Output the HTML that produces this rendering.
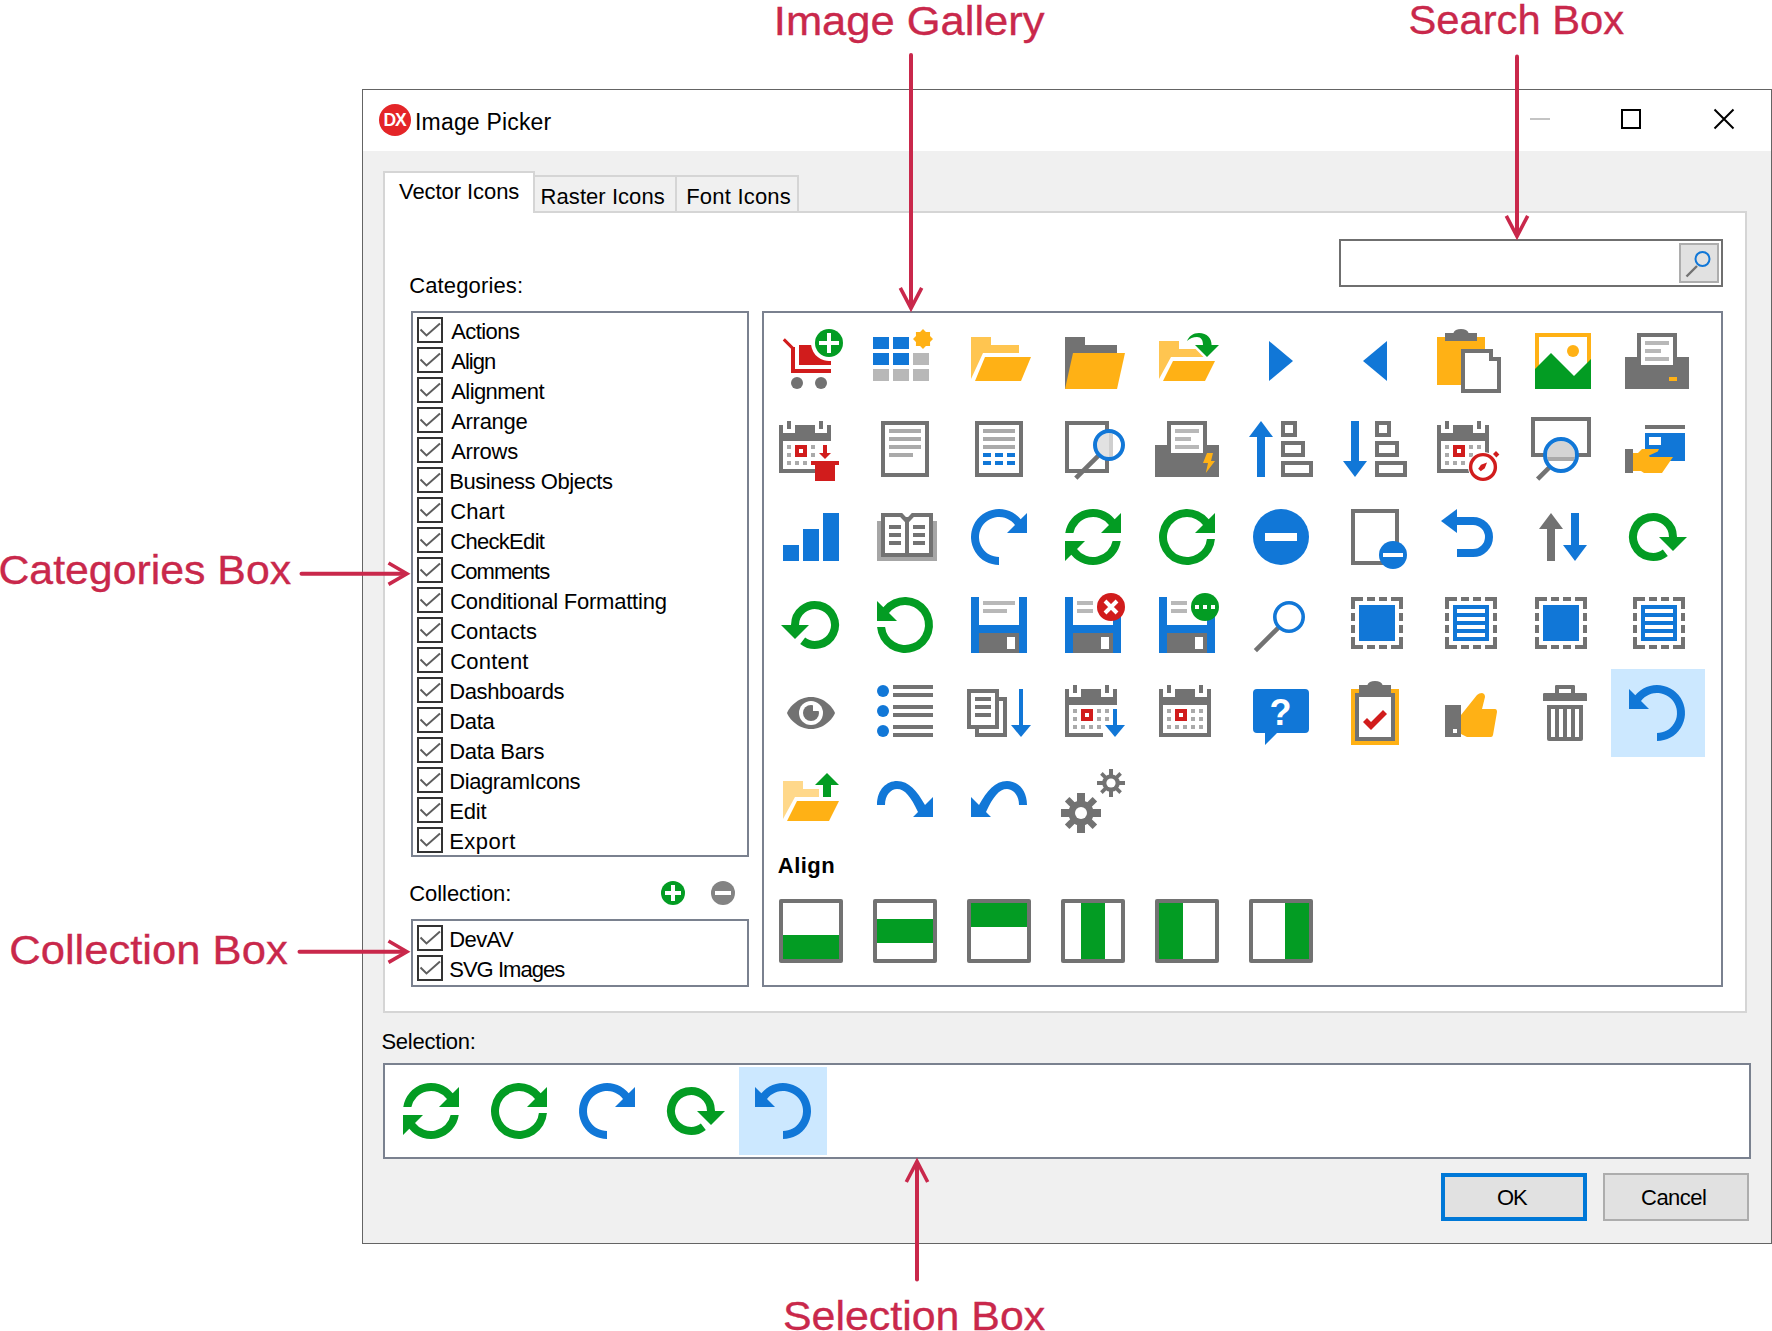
<!DOCTYPE html>
<html><head><meta charset="utf-8"><title>Image Picker</title>
<style>
html,body{margin:0;padding:0;background:#fff;}
body{width:1772px;height:1331px;position:relative;overflow:hidden;font-family:"Liberation Sans",sans-serif;color:#000;}
.abs{position:absolute;}
.t{position:absolute;white-space:nowrap;line-height:1;font-size:21px;}
.box{position:absolute;box-sizing:border-box;}
.cb{position:absolute;box-sizing:border-box;width:26px;height:26px;border:2px solid #333;background:#fff;}
.cb svg{position:absolute;left:0;top:0;}
.ic{position:absolute;width:64px;height:64px;}
svg{display:block;overflow:visible;}
</style></head><body>

<div class="box" style="left:362px;top:89px;width:1410px;height:1155px;border:1px solid #646464;background:#f0f0f0;"></div>
<div class="abs" style="left:363px;top:90px;width:1408px;height:61px;background:#fff;"></div>
<div class="abs" style="left:379px;top:104px;width:32px;height:32px;border-radius:16px;background:#E42528;"></div>
<div class="t" style="left:379px;top:111.5px;width:32px;text-align:center;font-size:17.5px;font-weight:bold;color:#fff;letter-spacing:-1.2px;text-indent:-1.2px;">DX</div>
<div class="t" style="left:415.00px;top:111.33px;font-size:23px;letter-spacing:0.182px;">Image Picker</div>
<div class="abs" style="left:1530px;top:118px;width:20px;height:2px;background:#c4c4c4;"></div>
<div class="box" style="left:1621px;top:109px;width:20px;height:20px;border:2px solid #000;"></div>
<svg class="abs" style="left:1714px;top:109px" width="20" height="20"><path d="M0.5,0.5L19.5,19.5M19.5,0.5L0.5,19.5" stroke="#000" stroke-width="2" fill="none"/></svg>
<div class="box" style="left:383px;top:211px;width:1364px;height:802px;border:2px solid #d5d5d5;background:#fff;"></div>
<div class="box" style="left:533px;top:175px;width:144px;height:38px;border:2px solid #d5d5d5;background:#f0f0f0;"></div>
<div class="box" style="left:675px;top:175px;width:124px;height:38px;border:2px solid #d5d5d5;background:#f0f0f0;"></div>
<div class="box" style="left:383px;top:171px;width:152px;height:42px;border:2px solid #d5d5d5;border-bottom:none;background:#fff;"></div>
<div class="t" style="left:399.00px;top:180.98px;font-size:22px;letter-spacing:-0.064px;">Vector Icons</div>
<div class="t" style="left:540.60px;top:185.88px;font-size:22px;letter-spacing:0.055px;">Raster Icons</div>
<div class="t" style="left:686.20px;top:185.88px;font-size:22px;letter-spacing:0.211px;">Font Icons</div>
<div class="box" style="left:1339px;top:239px;width:384px;height:48px;border:2px solid #6f6f6f;background:#fff;"></div>
<div class="box" style="left:1679px;top:243px;width:40px;height:40px;border:2px solid #adadad;background:#e1e1e1;"></div>
<svg class="abs" style="left:1679px;top:243px" width="40" height="40"><path d="M18,23L7.5,33.5" stroke="#727272" stroke-width="2.4" fill="none"/><circle cx="23.5" cy="16" r="7" fill="none" stroke="#1177D7" stroke-width="2"/></svg>
<div class="t" style="left:409.20px;top:275.08px;font-size:22px;letter-spacing:0.140px;">Categories:</div>
<div class="box" style="left:411px;top:311px;width:338px;height:546px;border:2px solid #7a818f;background:#fff;"></div>
<div class="cb" style="left:417px;top:317px"><svg width="22" height="22" viewBox="0 0 22 22"><path d="M1.5,10.5L7.5,16.5L21,4.5" fill="none" stroke="#5e5e5e" stroke-width="2"/></svg></div>
<div class="t" style="left:451.20px;top:320.88px;font-size:22px;letter-spacing:-0.567px;">Actions</div>
<div class="cb" style="left:417px;top:347px"><svg width="22" height="22" viewBox="0 0 22 22"><path d="M1.5,10.5L7.5,16.5L21,4.5" fill="none" stroke="#5e5e5e" stroke-width="2"/></svg></div>
<div class="t" style="left:451.20px;top:350.88px;font-size:22px;letter-spacing:-0.950px;">Align</div>
<div class="cb" style="left:417px;top:377px"><svg width="22" height="22" viewBox="0 0 22 22"><path d="M1.5,10.5L7.5,16.5L21,4.5" fill="none" stroke="#5e5e5e" stroke-width="2"/></svg></div>
<div class="t" style="left:451.20px;top:380.88px;font-size:22px;letter-spacing:-0.562px;">Alignment</div>
<div class="cb" style="left:417px;top:407px"><svg width="22" height="22" viewBox="0 0 22 22"><path d="M1.5,10.5L7.5,16.5L21,4.5" fill="none" stroke="#5e5e5e" stroke-width="2"/></svg></div>
<div class="t" style="left:451.20px;top:410.88px;font-size:22px;letter-spacing:-0.283px;">Arrange</div>
<div class="cb" style="left:417px;top:437px"><svg width="22" height="22" viewBox="0 0 22 22"><path d="M1.5,10.5L7.5,16.5L21,4.5" fill="none" stroke="#5e5e5e" stroke-width="2"/></svg></div>
<div class="t" style="left:451.20px;top:440.88px;font-size:22px;letter-spacing:-0.300px;">Arrows</div>
<div class="cb" style="left:417px;top:467px"><svg width="22" height="22" viewBox="0 0 22 22"><path d="M1.5,10.5L7.5,16.5L21,4.5" fill="none" stroke="#5e5e5e" stroke-width="2"/></svg></div>
<div class="t" style="left:449.20px;top:470.88px;font-size:22px;letter-spacing:-0.413px;">Business Objects</div>
<div class="cb" style="left:417px;top:497px"><svg width="22" height="22" viewBox="0 0 22 22"><path d="M1.5,10.5L7.5,16.5L21,4.5" fill="none" stroke="#5e5e5e" stroke-width="2"/></svg></div>
<div class="t" style="left:450.20px;top:500.88px;font-size:22px;letter-spacing:0.150px;">Chart</div>
<div class="cb" style="left:417px;top:527px"><svg width="22" height="22" viewBox="0 0 22 22"><path d="M1.5,10.5L7.5,16.5L21,4.5" fill="none" stroke="#5e5e5e" stroke-width="2"/></svg></div>
<div class="t" style="left:450.20px;top:530.88px;font-size:22px;letter-spacing:-0.688px;">CheckEdit</div>
<div class="cb" style="left:417px;top:557px"><svg width="22" height="22" viewBox="0 0 22 22"><path d="M1.5,10.5L7.5,16.5L21,4.5" fill="none" stroke="#5e5e5e" stroke-width="2"/></svg></div>
<div class="t" style="left:450.20px;top:560.88px;font-size:22px;letter-spacing:-0.914px;">Comments</div>
<div class="cb" style="left:417px;top:587px"><svg width="22" height="22" viewBox="0 0 22 22"><path d="M1.5,10.5L7.5,16.5L21,4.5" fill="none" stroke="#5e5e5e" stroke-width="2"/></svg></div>
<div class="t" style="left:450.20px;top:590.88px;font-size:22px;letter-spacing:-0.219px;">Conditional Formatting</div>
<div class="cb" style="left:417px;top:617px"><svg width="22" height="22" viewBox="0 0 22 22"><path d="M1.5,10.5L7.5,16.5L21,4.5" fill="none" stroke="#5e5e5e" stroke-width="2"/></svg></div>
<div class="t" style="left:450.20px;top:620.88px;font-size:22px;letter-spacing:-0.014px;">Contacts</div>
<div class="cb" style="left:417px;top:647px"><svg width="22" height="22" viewBox="0 0 22 22"><path d="M1.5,10.5L7.5,16.5L21,4.5" fill="none" stroke="#5e5e5e" stroke-width="2"/></svg></div>
<div class="t" style="left:450.20px;top:650.88px;font-size:22px;letter-spacing:0.200px;">Content</div>
<div class="cb" style="left:417px;top:677px"><svg width="22" height="22" viewBox="0 0 22 22"><path d="M1.5,10.5L7.5,16.5L21,4.5" fill="none" stroke="#5e5e5e" stroke-width="2"/></svg></div>
<div class="t" style="left:449.20px;top:680.88px;font-size:22px;letter-spacing:-0.356px;">Dashboards</div>
<div class="cb" style="left:417px;top:707px"><svg width="22" height="22" viewBox="0 0 22 22"><path d="M1.5,10.5L7.5,16.5L21,4.5" fill="none" stroke="#5e5e5e" stroke-width="2"/></svg></div>
<div class="t" style="left:449.20px;top:710.88px;font-size:22px;letter-spacing:-0.267px;">Data</div>
<div class="cb" style="left:417px;top:737px"><svg width="22" height="22" viewBox="0 0 22 22"><path d="M1.5,10.5L7.5,16.5L21,4.5" fill="none" stroke="#5e5e5e" stroke-width="2"/></svg></div>
<div class="t" style="left:449.20px;top:740.88px;font-size:22px;letter-spacing:-0.300px;">Data Bars</div>
<div class="cb" style="left:417px;top:767px"><svg width="22" height="22" viewBox="0 0 22 22"><path d="M1.5,10.5L7.5,16.5L21,4.5" fill="none" stroke="#5e5e5e" stroke-width="2"/></svg></div>
<div class="t" style="left:449.20px;top:770.88px;font-size:22px;letter-spacing:-0.391px;">DiagramIcons</div>
<div class="cb" style="left:417px;top:797px"><svg width="22" height="22" viewBox="0 0 22 22"><path d="M1.5,10.5L7.5,16.5L21,4.5" fill="none" stroke="#5e5e5e" stroke-width="2"/></svg></div>
<div class="t" style="left:449.20px;top:800.88px;font-size:22px;letter-spacing:-0.133px;">Edit</div>
<div class="cb" style="left:417px;top:827px"><svg width="22" height="22" viewBox="0 0 22 22"><path d="M1.5,10.5L7.5,16.5L21,4.5" fill="none" stroke="#5e5e5e" stroke-width="2"/></svg></div>
<div class="t" style="left:449.20px;top:830.88px;font-size:22px;letter-spacing:0.500px;">Export</div>
<div class="t" style="left:409.20px;top:883.08px;font-size:22px;letter-spacing:-0.050px;">Collection:</div>
<svg class="abs" style="left:661px;top:881px" width="24" height="24"><circle cx="12" cy="12" r="12" fill="#039C23"/><path d="M4,12H20M12,4V20" stroke="#fff" stroke-width="4" fill="none"/></svg>
<svg class="abs" style="left:711px;top:881px" width="24" height="24"><circle cx="12" cy="12" r="12" fill="#838383"/><path d="M4,12H20" stroke="#fff" stroke-width="4" fill="none"/></svg>
<div class="box" style="left:411px;top:919px;width:338px;height:68px;border:2px solid #7a818f;background:#fff;"></div>
<div class="cb" style="left:417px;top:925px"><svg width="22" height="22" viewBox="0 0 22 22"><path d="M1.5,10.5L7.5,16.5L21,4.5" fill="none" stroke="#5e5e5e" stroke-width="2"/></svg></div>
<div class="t" style="left:449.20px;top:928.78px;font-size:22px;letter-spacing:-0.575px;">DevAV</div>
<div class="cb" style="left:417px;top:955px"><svg width="22" height="22" viewBox="0 0 22 22"><path d="M1.5,10.5L7.5,16.5L21,4.5" fill="none" stroke="#5e5e5e" stroke-width="2"/></svg></div>
<div class="t" style="left:449.20px;top:958.78px;font-size:22px;letter-spacing:-0.967px;">SVG Images</div>
<div class="box" style="left:762px;top:311px;width:961px;height:676px;border:2px solid #7a818f;background:#fff;"></div>
<div class="abs" style="left:1611px;top:669px;width:94px;height:88px;background:#cce8ff;"></div>
<svg class="ic" style="left:779px;top:329px" viewBox="0 0 32 32"><path d="M10,8H16.06A9,9 0 0 0 26,15.94V18H10Z" fill="#D11C1C" /><path d="M2.4,5.2L6.9,9.7" fill="none" stroke="#D11C1C" stroke-width="1.5"/><path d="M7,9V21H26" fill="none" stroke="#D11C1C" stroke-width="2"/><circle cx="9" cy="27" r="3" fill="#727272" /><circle cx="21" cy="27" r="3" fill="#727272" /><circle cx="25" cy="7" r="7" fill="#039C23" /><rect x="20" y="6" width="10" height="2" fill="#fff"/><rect x="24" y="2" width="2" height="10" fill="#fff"/></svg>
<svg class="ic" style="left:873px;top:329px" viewBox="0 0 32 32"><rect x="0" y="4" width="8" height="6" fill="#1177D7"/><rect x="10" y="4" width="8" height="6" fill="#1177D7"/><rect x="0" y="12" width="8" height="6" fill="#1177D7"/><rect x="10" y="12" width="8" height="6" fill="#1177D7"/><rect x="20" y="12" width="8" height="6" fill="#b8b8b8"/><rect x="0" y="20" width="8" height="6" fill="#b8b8b8"/><rect x="10" y="20" width="8" height="6" fill="#b8b8b8"/><rect x="20" y="20" width="8" height="6" fill="#b8b8b8"/><polygon points="25.00,0.00 26.45,1.49 28.54,1.46 28.51,3.55 30.00,5.00 28.51,6.45 28.54,8.54 26.45,8.51 25.00,10.00 23.55,8.51 21.46,8.54 21.49,6.45 20.00,5.00 21.49,3.55 21.46,1.46 23.55,1.49" fill="#FFB115"/></svg>
<svg class="ic" style="left:967px;top:329px" viewBox="0 0 32 32"><path d="M2,4H12V8H26V12H8L2,25Z" fill="#FFB115" opacity="0.75"/><path d="M9,14H32L27,26H4Z" fill="#FFB115" /></svg>
<svg class="ic" style="left:1061px;top:329px" viewBox="0 0 32 32"><path d="M2,4H12V8H28V30H2Z" fill="#727272" /><path d="M6,12H32L28,30H2Z" fill="#FFB115" /></svg>
<svg class="ic" style="left:1155px;top:329px" viewBox="0 0 32 32"><path d="M2,6H12V10H26V14H8L2,25Z" fill="#FFB115" opacity="0.75"/><path d="M9,16H30L25,26H4Z" fill="#FFB115" /><path d="M20,8H32L26,14Z" fill="#fff" stroke="#fff" stroke-width="2.4"/><path d="M16,6C17,3.6 19,2 22,2C26,2 28.3,4.5 28.3,8.2H24C24,5.5 23,4 21,4C19,4 17.5,4.8 16,6Z" fill="#039C23" /><path d="M20,8H32L26,14Z" fill="#039C23" /></svg>
<svg class="ic" style="left:1249px;top:329px" viewBox="0 0 32 32"><path d="M10,6L22,16L10,26Z" fill="#1177D7" /></svg>
<svg class="ic" style="left:1343px;top:329px" viewBox="0 0 32 32"><path d="M22,6L10,16L22,26Z" fill="#1177D7" /></svg>
<svg class="ic" style="left:1437px;top:329px" viewBox="0 0 32 32"><rect x="0" y="4" width="24" height="24" fill="#FFB115"/><path d="M4,6V2H8.2C8.6,0.7 10,0 12,0S15.4,0.7 15.8,2H20V6Z" fill="#727272" /><path d="M12,10H28V14H32V32H12Z" fill="#727272" /><path d="M14,12H26V16H30V30H14Z" fill="#fff" /></svg>
<svg class="ic" style="left:1531px;top:329px" viewBox="0 0 32 32"><rect x="2" y="2" width="28" height="28" fill="#FFB115"/><rect x="4" y="4" width="24" height="24" fill="#fff"/><circle cx="21" cy="11" r="3" fill="#FFB115" /><path d="M2,20L10,12L21.5,23.5L30,15V30H2Z" fill="#039C23" /></svg>
<svg class="ic" style="left:1625px;top:329px" viewBox="0 0 32 32"><rect x="0" y="14" width="32" height="16" fill="#727272"/><rect x="6" y="2" width="20" height="12" fill="#727272"/><rect x="8" y="4" width="16" height="14" fill="#fff"/><rect x="10" y="6" width="12" height="2" fill="#b8b8b8"/><rect x="10" y="10" width="8" height="2" fill="#b8b8b8"/><rect x="10" y="14" width="12" height="2" fill="#b8b8b8"/><rect x="22" y="24" width="4" height="2" fill="#FFB115"/></svg>
<svg class="ic" style="left:779px;top:417px" viewBox="0 0 32 32"><rect x="0" y="4" width="2" height="24" fill="#727272"/><rect x="0" y="8" width="26" height="4" fill="#727272"/><rect x="8" y="4" width="10" height="4" fill="#727272"/><rect x="24" y="4" width="2" height="8" fill="#727272"/><rect x="0" y="26" width="18" height="2" fill="#727272"/><rect x="4" y="2" width="2" height="4" fill="#727272"/><rect x="20" y="2" width="2" height="4" fill="#727272"/><rect x="4" y="14" width="2" height="2" fill="#aaaaaa"/><rect x="16" y="14" width="2" height="2" fill="#aaaaaa"/><rect x="4" y="18" width="2" height="2" fill="#aaaaaa"/><rect x="16" y="18" width="2" height="2" fill="#aaaaaa"/><rect x="4" y="22" width="2" height="2" fill="#aaaaaa"/><rect x="8" y="22" width="2" height="2" fill="#aaaaaa"/><rect x="12" y="22" width="2" height="2" fill="#aaaaaa"/><rect x="8" y="14" width="6" height="6" fill="#D11C1C"/><rect x="10" y="16" width="2" height="2" fill="#fff"/><rect x="22" y="14" width="2" height="4" fill="#D11C1C"/><path d="M20,18H26L23,21Z" fill="#D11C1C" /><rect x="16" y="22" width="14" height="2" fill="#D11C1C"/><rect x="18" y="24" width="10" height="8" fill="#D11C1C"/></svg>
<svg class="ic" style="left:873px;top:417px" viewBox="0 0 32 32"><rect x="4" y="2" width="24" height="28" fill="#727272"/><rect x="6" y="4" width="20" height="24" fill="#fff"/><rect x="8" y="6" width="16" height="2" fill="#aaaaaa"/><rect x="8" y="10" width="16" height="2" fill="#aaaaaa"/><rect x="8" y="14" width="16" height="2" fill="#aaaaaa"/><rect x="8" y="18" width="12" height="2" fill="#aaaaaa"/></svg>
<svg class="ic" style="left:967px;top:417px" viewBox="0 0 32 32"><rect x="4" y="2" width="24" height="28" fill="#727272"/><rect x="6" y="4" width="20" height="24" fill="#fff"/><rect x="8" y="6" width="16" height="2" fill="#aaaaaa"/><rect x="8" y="10" width="16" height="2" fill="#aaaaaa"/><rect x="8" y="14" width="16" height="2" fill="#aaaaaa"/><rect x="8" y="18" width="4" height="2" fill="#1177D7"/><rect x="14" y="18" width="4" height="2" fill="#1177D7"/><rect x="20" y="18" width="4" height="2" fill="#1177D7"/><rect x="8" y="22" width="4" height="2" fill="#1177D7"/><rect x="14" y="22" width="4" height="2" fill="#1177D7"/><rect x="20" y="22" width="4" height="2" fill="#1177D7"/></svg>
<svg class="ic" style="left:1061px;top:417px" viewBox="0 0 32 32"><rect x="2" y="2" width="22" height="26" fill="#727272"/><rect x="4" y="4" width="18" height="22" fill="#fff"/><path d="M18.6,19.4L7.4,30.6" stroke="#727272" stroke-width="2.3" fill="none"/><circle cx="24" cy="14" r="7" fill="#fff" /><path d="M24,8A6,6 0 0 0 24,20Z" fill="#e2e2e2" /><path d="M24,8A6,6 0 0 1 26,8.34V19.66A6,6 0 0 1 24,20Z" fill="#cfcfcf" /><circle cx="24" cy="14" r="7" fill="none" stroke="#1177D7" stroke-width="2"/></svg>
<svg class="ic" style="left:1155px;top:417px" viewBox="0 0 32 32"><rect x="0" y="14" width="32" height="16" fill="#727272"/><rect x="6" y="2" width="20" height="12" fill="#727272"/><rect x="8" y="4" width="16" height="14" fill="#fff"/><rect x="10" y="6" width="12" height="2" fill="#b8b8b8"/><rect x="10" y="10" width="8" height="2" fill="#b8b8b8"/><rect x="10" y="14" width="12" height="2" fill="#b8b8b8"/><path d="M26,18H29L28,22H30L25.4,28L26.5,23H24Z" fill="#FFB115" /></svg>
<svg class="ic" style="left:1249px;top:417px" viewBox="0 0 32 32"><rect x="4" y="10" width="4" height="20" fill="#1177D7"/><path d="M6,2L12,10H0Z" fill="#1177D7" /><rect x="16" y="2" width="8" height="8" fill="#727272"/><rect x="18" y="4" width="4" height="4" fill="#fff"/><rect x="16" y="12" width="12" height="8" fill="#727272"/><rect x="18" y="14" width="8" height="4" fill="#fff"/><rect x="16" y="22" width="16" height="8" fill="#727272"/><rect x="18" y="24" width="12" height="4" fill="#fff"/></svg>
<svg class="ic" style="left:1343px;top:417px" viewBox="0 0 32 32"><rect x="4" y="2" width="4" height="20" fill="#1177D7"/><path d="M0,22H12L6,30Z" fill="#1177D7" /><rect x="16" y="2" width="8" height="8" fill="#727272"/><rect x="18" y="4" width="4" height="4" fill="#fff"/><rect x="16" y="12" width="12" height="8" fill="#727272"/><rect x="18" y="14" width="8" height="4" fill="#fff"/><rect x="16" y="22" width="16" height="8" fill="#727272"/><rect x="18" y="24" width="12" height="4" fill="#fff"/></svg>
<svg class="ic" style="left:1437px;top:417px" viewBox="0 0 32 32"><rect x="0" y="4" width="2" height="24" fill="#727272"/><rect x="0" y="8" width="26" height="4" fill="#727272"/><rect x="8" y="4" width="10" height="4" fill="#727272"/><rect x="24" y="4" width="2" height="15" fill="#727272"/><rect x="0" y="26" width="16" height="2" fill="#727272"/><rect x="4" y="2" width="2" height="4" fill="#727272"/><rect x="20" y="2" width="2" height="4" fill="#727272"/><rect x="4" y="14" width="2" height="2" fill="#aaaaaa"/><rect x="16" y="14" width="2" height="2" fill="#aaaaaa"/><rect x="20" y="14" width="2" height="2" fill="#aaaaaa"/><rect x="4" y="18" width="2" height="2" fill="#aaaaaa"/><rect x="16" y="18" width="2" height="2" fill="#aaaaaa"/><rect x="4" y="22" width="2" height="2" fill="#aaaaaa"/><rect x="8" y="22" width="2" height="2" fill="#aaaaaa"/><rect x="12" y="22" width="2" height="2" fill="#aaaaaa"/><rect x="8" y="14" width="6" height="6" fill="#D11C1C"/><rect x="10" y="16" width="2" height="2" fill="#fff"/><circle cx="23" cy="25" r="7.5" fill="#fff" /><circle cx="23" cy="25" r="6.2" fill="#fff" stroke="#D11C1C" stroke-width="1.7"/><path d="M20.6,25.9L22,23.9L25,22.8L23.9,25.6L21.9,27.1Z" fill="#D11C1C" /><path d="M29.5,17L31.2,18.7L29.7,20.2L28,18.5Z" fill="#D11C1C" /></svg>
<svg class="ic" style="left:1531px;top:417px" viewBox="0 0 32 32"><rect x="0" y="0" width="30" height="20" fill="#727272"/><rect x="2" y="2" width="26" height="16" fill="#fff"/><path d="M9.2,25.2L3.3,31.1" stroke="#727272" stroke-width="2.3" fill="none"/><circle cx="15" cy="19" r="8" fill="#fff" /><path d="M8.07,20A7,7 0 1 1 21.93,20Z" fill="#d4d4d4" /><path d="M8.07,20H21.93A7,7 0 0 1 21.32,22H8.68A7,7 0 0 1 8.07,20Z" fill="#a9a9a9" /><circle cx="15" cy="19" r="8" fill="none" stroke="#1177D7" stroke-width="2"/></svg>
<svg class="ic" style="left:1625px;top:417px" viewBox="0 0 32 32"><rect x="10" y="4" width="20" height="2" fill="#727272"/><rect x="10" y="8" width="20" height="14" fill="#1177D7"/><rect x="12" y="10" width="6" height="4" fill="#fff"/><rect x="0" y="16" width="4" height="12" fill="#727272"/><path d="M4,18H6.5L8.5,16H17L16.4,17.2L12,19.2L12.4,20H24L18.5,28H9.5L8,27H4Z" fill="#FFB115" /></svg>
<svg class="ic" style="left:779px;top:505px" viewBox="0 0 32 32"><rect x="2" y="20" width="8" height="8" fill="#1177D7"/><rect x="12" y="12" width="8" height="16" fill="#1177D7"/><rect x="22" y="4" width="8" height="24" fill="#1177D7"/></svg>
<svg class="ic" style="left:873px;top:505px" viewBox="0 0 32 32"><rect x="2" y="8" width="30" height="20" fill="#a6a6a6"/><rect x="4" y="4" width="26" height="22" fill="#727272"/><rect x="6" y="6" width="10" height="18" fill="#fff"/><rect x="18" y="6" width="10" height="18" fill="#fff"/><path d="M14.6,4H19.4L17,6.6Z" fill="#fff" /><path d="M13.6,6H20.4L17,9.6Z" fill="#727272" /><rect x="8" y="10" width="6" height="2" fill="#727272"/><rect x="8" y="14" width="6" height="2" fill="#727272"/><rect x="8" y="18" width="6" height="2" fill="#727272"/><rect x="20" y="10" width="6" height="2" fill="#727272"/><rect x="20" y="14" width="6" height="2" fill="#727272"/><rect x="20" y="18" width="6" height="2" fill="#727272"/></svg>
<svg class="ic" style="left:967px;top:505px" viewBox="0 0 32 32"><path d="M16,30A14,14 0 1 1 26.85,7.15L30,4V14H20L24,10A10,10 0 1 0 16,26Z" fill="#1177D7" /></svg>
<svg class="ic" style="left:1061px;top:505px" viewBox="0 0 32 32"><path d="M2.14,14A14,14 0 0 1 26.85,7.15L30,4V14H20L24,10A10,10 0 0 0 6.2,14Z" fill="#039C23" /><path d="M29.86,18A14,14 0 0 1 5.15,24.85L2,28V18H12L8,22A10,10 0 0 0 25.8,18Z" fill="#039C23" /></svg>
<svg class="ic" style="left:1155px;top:505px" viewBox="0 0 32 32"><path d="M29.96,17A14,14 0 1 1 26.85,7.15L30,4V14H20L24,10A10,10 0 1 0 25.95,17Z" fill="#039C23" /></svg>
<svg class="ic" style="left:1249px;top:505px" viewBox="0 0 32 32"><circle cx="16" cy="16" r="14" fill="#1177D7" /><rect x="8" y="14" width="16" height="4" fill="#fff"/></svg>
<svg class="ic" style="left:1343px;top:505px" viewBox="0 0 32 32"><rect x="4" y="2" width="24" height="28" fill="#727272"/><rect x="6" y="4" width="20" height="24" fill="#fff"/><circle cx="25" cy="25" r="7" fill="#1177D7" /><rect x="20" y="24" width="10" height="2" fill="#fff"/></svg>
<svg class="ic" style="left:1437px;top:505px" viewBox="0 0 32 32"><path d="M2,8L10,2V14Z" fill="#1177D7" /><path d="M10,8H18A8,8 0 0 1 18,24H10" fill="none" stroke="#1177D7" stroke-width="4"/></svg>
<svg class="ic" style="left:1531px;top:505px" viewBox="0 0 32 32"><rect x="8" y="12" width="4" height="16" fill="#727272"/><path d="M10,4L16,12H4Z" fill="#727272" /><rect x="20" y="4" width="4" height="16" fill="#1177D7"/><path d="M16,20H28L22,28Z" fill="#1177D7" /></svg>
<svg class="ic" style="left:1625px;top:505px" viewBox="0 0 32 32"><path d="M24,16A10,10 0 1 0 20.16,23.88" fill="none" stroke="#039C23" stroke-width="4"/><path d="M17,16H31L24,23Z" fill="#039C23" /></svg>
<svg class="ic" style="left:779px;top:593px" viewBox="0 0 32 32"><g transform="translate(32,0) scale(-1,1)"><path d="M24,16A10,10 0 1 0 20.16,23.88" fill="none" stroke="#039C23" stroke-width="4"/><path d="M17,16H31L24,23Z" fill="#039C23" /></g></svg>
<svg class="ic" style="left:873px;top:593px" viewBox="0 0 32 32"><g transform="translate(32,0) scale(-1,1)"><path d="M29.96,17A14,14 0 1 1 26.85,7.15L30,4V14H20L24,10A10,10 0 1 0 25.95,17Z" fill="#039C23" /></g></svg>
<svg class="ic" style="left:967px;top:593px" viewBox="0 0 32 32"><path d="M2,2H6V16H26V2H30V30H2Z" fill="#1177D7" /><rect x="6" y="20" width="20" height="10" fill="#727272"/><rect x="20" y="22" width="4" height="6" fill="#fff"/><rect x="8" y="4" width="16" height="2" fill="#b8b8b8"/><rect x="8" y="8" width="12" height="2" fill="#b8b8b8"/></svg>
<svg class="ic" style="left:1061px;top:593px" viewBox="0 0 32 32"><path d="M2,2H6V16H26V2H30V30H2Z" fill="#1177D7" /><rect x="6" y="20" width="20" height="10" fill="#727272"/><rect x="20" y="22" width="4" height="6" fill="#fff"/><rect x="8" y="4" width="8" height="2" fill="#b8b8b8"/><rect x="8" y="8" width="8" height="2" fill="#b8b8b8"/><circle cx="25" cy="7" r="7" fill="#D11C1C" /><path d="M22,4L28,10M28,4L22,10" stroke="#fff" stroke-width="2" fill="none"/></svg>
<svg class="ic" style="left:1155px;top:593px" viewBox="0 0 32 32"><path d="M2,2H6V16H26V2H30V30H2Z" fill="#1177D7" /><rect x="6" y="20" width="20" height="10" fill="#727272"/><rect x="20" y="22" width="4" height="6" fill="#fff"/><rect x="8" y="4" width="8" height="2" fill="#b8b8b8"/><rect x="8" y="8" width="8" height="2" fill="#b8b8b8"/><circle cx="25" cy="7" r="7" fill="#039C23" /><rect x="20" y="6" width="2" height="2" fill="#fff"/><rect x="24" y="6" width="2" height="2" fill="#fff"/><rect x="28" y="6" width="2" height="2" fill="#fff"/></svg>
<svg class="ic" style="left:1249px;top:593px" viewBox="0 0 32 32"><path d="M14.6,17.4L3.2,28.8" stroke="#727272" stroke-width="2.3" fill="none"/><circle cx="20" cy="12" r="7.1" fill="#fff" stroke="#1177D7" stroke-width="1.8"/></svg>
<svg class="ic" style="left:1343px;top:593px" viewBox="0 0 32 32"><path d="M4,2H10V4H6V8H4Z" fill="#727272" /><path d="M30,2H24V4H28V8H30Z" fill="#727272" /><path d="M4,28H10V26H6V22H4Z" fill="#727272" /><path d="M30,28H24V26H28V22H30Z" fill="#727272" /><rect x="12" y="2" width="4" height="2" fill="#727272"/><rect x="12" y="26" width="4" height="2" fill="#727272"/><rect x="18" y="2" width="4" height="2" fill="#727272"/><rect x="18" y="26" width="4" height="2" fill="#727272"/><rect x="4" y="10" width="2" height="4" fill="#727272"/><rect x="28" y="10" width="2" height="4" fill="#727272"/><rect x="4" y="16" width="2" height="4" fill="#727272"/><rect x="28" y="16" width="2" height="4" fill="#727272"/><rect x="8" y="6" width="18" height="18" fill="#1177D7"/></svg>
<svg class="ic" style="left:1437px;top:593px" viewBox="0 0 32 32"><path d="M4,2H10V4H6V8H4Z" fill="#727272" /><path d="M30,2H24V4H28V8H30Z" fill="#727272" /><path d="M4,28H10V26H6V22H4Z" fill="#727272" /><path d="M30,28H24V26H28V22H30Z" fill="#727272" /><rect x="12" y="2" width="4" height="2" fill="#727272"/><rect x="12" y="26" width="4" height="2" fill="#727272"/><rect x="18" y="2" width="4" height="2" fill="#727272"/><rect x="18" y="26" width="4" height="2" fill="#727272"/><rect x="4" y="10" width="2" height="4" fill="#727272"/><rect x="28" y="10" width="2" height="4" fill="#727272"/><rect x="4" y="16" width="2" height="4" fill="#727272"/><rect x="28" y="16" width="2" height="4" fill="#727272"/><rect x="8" y="6" width="18" height="18" fill="#1177D7"/><rect x="10" y="8" width="14" height="2" fill="#fff"/><rect x="10" y="12" width="14" height="2" fill="#fff"/><rect x="10" y="16" width="14" height="2" fill="#fff"/><rect x="10" y="20" width="14" height="2" fill="#fff"/></svg>
<svg class="ic" style="left:1531px;top:593px" viewBox="0 0 32 32"><path d="M2,2H8V4H4V8H2Z" fill="#727272" /><path d="M28,2H22V4H26V8H28Z" fill="#727272" /><path d="M2,28H8V26H4V22H2Z" fill="#727272" /><path d="M28,28H22V26H26V22H28Z" fill="#727272" /><rect x="10" y="2" width="4" height="2" fill="#727272"/><rect x="10" y="26" width="4" height="2" fill="#727272"/><rect x="16" y="2" width="4" height="2" fill="#727272"/><rect x="16" y="26" width="4" height="2" fill="#727272"/><rect x="2" y="10" width="2" height="4" fill="#727272"/><rect x="26" y="10" width="2" height="4" fill="#727272"/><rect x="2" y="16" width="2" height="4" fill="#727272"/><rect x="26" y="16" width="2" height="4" fill="#727272"/><rect x="6" y="6" width="18" height="18" fill="#1177D7"/></svg>
<svg class="ic" style="left:1625px;top:593px" viewBox="0 0 32 32"><path d="M4,2H10V4H6V8H4Z" fill="#727272" /><path d="M30,2H24V4H28V8H30Z" fill="#727272" /><path d="M4,28H10V26H6V22H4Z" fill="#727272" /><path d="M30,28H24V26H28V22H30Z" fill="#727272" /><rect x="12" y="2" width="4" height="2" fill="#727272"/><rect x="12" y="26" width="4" height="2" fill="#727272"/><rect x="18" y="2" width="4" height="2" fill="#727272"/><rect x="18" y="26" width="4" height="2" fill="#727272"/><rect x="4" y="10" width="2" height="4" fill="#727272"/><rect x="28" y="10" width="2" height="4" fill="#727272"/><rect x="4" y="16" width="2" height="4" fill="#727272"/><rect x="28" y="16" width="2" height="4" fill="#727272"/><rect x="8" y="6" width="18" height="18" fill="#1177D7"/><rect x="10" y="8" width="14" height="2" fill="#fff"/><rect x="10" y="12" width="14" height="2" fill="#fff"/><rect x="10" y="16" width="14" height="2" fill="#fff"/><rect x="10" y="20" width="14" height="2" fill="#fff"/></svg>
<svg class="ic" style="left:779px;top:681px" viewBox="0 0 32 32"><path d="M4,16C5,13.2 9.5,8 16,8C22.5,8 27,13.2 28,16C27,18.8 22.5,24 16,24C9.5,24 5,18.8 4,16Z" fill="#727272" /><circle cx="16" cy="16" r="6" fill="#fff" /><circle cx="16" cy="16" r="4" fill="#727272" /><path d="M17,12H20V15H17Z" fill="#fff" /></svg>
<svg class="ic" style="left:873px;top:681px" viewBox="0 0 32 32"><circle cx="5" cy="5" r="3" fill="#1177D7" /><circle cx="5" cy="15" r="3" fill="#1177D7" /><circle cx="5" cy="25" r="3" fill="#1177D7" /><rect x="10" y="2" width="20" height="2" fill="#727272"/><rect x="10" y="6" width="20" height="2" fill="#727272"/><rect x="10" y="12" width="20" height="2" fill="#727272"/><rect x="10" y="16" width="20" height="2" fill="#727272"/><rect x="10" y="22" width="20" height="2" fill="#727272"/><rect x="10" y="26" width="20" height="2" fill="#727272"/></svg>
<svg class="ic" style="left:967px;top:681px" viewBox="0 0 32 32"><rect x="4" y="8" width="16" height="20" fill="#727272"/><rect x="6" y="10" width="12" height="16" fill="#fff"/><rect x="0" y="4" width="16" height="20" fill="#727272"/><rect x="2" y="6" width="12" height="16" fill="#fff"/><rect x="4" y="8" width="8" height="2" fill="#727272"/><rect x="4" y="12" width="8" height="2" fill="#727272"/><rect x="4" y="16" width="8" height="2" fill="#727272"/><rect x="26" y="4" width="2" height="18" fill="#1177D7"/><path d="M22,22H32L27,28Z" fill="#1177D7" /></svg>
<svg class="ic" style="left:1061px;top:681px" viewBox="0 0 32 32"><rect x="2" y="4" width="2" height="24" fill="#727272"/><rect x="2" y="8" width="26" height="4" fill="#727272"/><rect x="10" y="4" width="10" height="4" fill="#727272"/><rect x="26" y="4" width="2" height="8" fill="#727272"/><rect x="2" y="26" width="19" height="2" fill="#727272"/><rect x="6" y="2" width="2" height="4" fill="#727272"/><rect x="22" y="2" width="2" height="4" fill="#727272"/><rect x="6" y="14" width="2" height="2" fill="#aaaaaa"/><rect x="18" y="14" width="2" height="2" fill="#aaaaaa"/><rect x="22" y="14" width="2" height="2" fill="#aaaaaa"/><rect x="6" y="18" width="2" height="2" fill="#aaaaaa"/><rect x="18" y="18" width="2" height="2" fill="#aaaaaa"/><rect x="22" y="18" width="2" height="2" fill="#aaaaaa"/><rect x="6" y="22" width="2" height="2" fill="#aaaaaa"/><rect x="10" y="22" width="2" height="2" fill="#aaaaaa"/><rect x="14" y="22" width="2" height="2" fill="#aaaaaa"/><rect x="18" y="22" width="2" height="2" fill="#aaaaaa"/><rect x="10" y="14" width="6" height="6" fill="#D11C1C"/><rect x="12" y="16" width="2" height="2" fill="#fff"/><rect x="26" y="14" width="2" height="8" fill="#1177D7"/><path d="M22,22H32L27,28Z" fill="#1177D7" /></svg>
<svg class="ic" style="left:1155px;top:681px" viewBox="0 0 32 32"><rect x="2" y="4" width="2" height="24" fill="#727272"/><rect x="2" y="8" width="26" height="4" fill="#727272"/><rect x="10" y="4" width="10" height="4" fill="#727272"/><rect x="26" y="4" width="2" height="24" fill="#727272"/><rect x="2" y="26" width="26" height="2" fill="#727272"/><rect x="6" y="2" width="2" height="4" fill="#727272"/><rect x="22" y="2" width="2" height="4" fill="#727272"/><rect x="6" y="14" width="2" height="2" fill="#aaaaaa"/><rect x="18" y="14" width="2" height="2" fill="#aaaaaa"/><rect x="22" y="14" width="2" height="2" fill="#aaaaaa"/><rect x="6" y="18" width="2" height="2" fill="#aaaaaa"/><rect x="18" y="18" width="2" height="2" fill="#aaaaaa"/><rect x="22" y="18" width="2" height="2" fill="#aaaaaa"/><rect x="6" y="22" width="2" height="2" fill="#aaaaaa"/><rect x="10" y="22" width="2" height="2" fill="#aaaaaa"/><rect x="14" y="22" width="2" height="2" fill="#aaaaaa"/><rect x="18" y="22" width="2" height="2" fill="#aaaaaa"/><rect x="22" y="22" width="2" height="2" fill="#aaaaaa"/><rect x="10" y="14" width="6" height="6" fill="#D11C1C"/><rect x="12" y="16" width="2" height="2" fill="#fff"/></svg>
<svg class="ic" style="left:1249px;top:681px" viewBox="0 0 32 32"><path d="M4,4H28A2,2 0 0 1 30,6V24A2,2 0 0 1 28,26H14L8,32V26H4A2,2 0 0 1 2,24V6A2,2 0 0 1 4,4Z" fill="#1177D7" /><text x="15.8" y="22" font-family="Liberation Sans, sans-serif" font-weight="bold" font-size="18" fill="#fff" text-anchor="middle">?</text></svg>
<svg class="ic" style="left:1343px;top:681px" viewBox="0 0 32 32"><rect x="4" y="4" width="24" height="28" fill="#FFB115"/><rect x="6" y="6" width="20" height="24" fill="#727272"/><rect x="8" y="8" width="16" height="20" fill="#fff"/><path d="M8,8V2H12.2C12.6,0.7 14,0 16,0S19.4,0.7 19.8,2H24V8Z" fill="#727272" /><path d="M10,20.5L12,18.5L14,20.5L20,14.5L22,16.5L14,24.5Z" fill="#D11C1C" /></svg>
<svg class="ic" style="left:1437px;top:681px" viewBox="0 0 32 32"><rect x="4" y="12" width="8" height="16" fill="#727272"/><rect x="8" y="24" width="2" height="2" fill="#fff"/><path d="M12,17L20,7Q21,6 22.5,6Q24,6.3 24,8L22.5,14H29Q30,14 30,15.5L28,27Q27.8,28 27,28H15L12,26.5Z" fill="#FFB115" /></svg>
<svg class="ic" style="left:1531px;top:681px" viewBox="0 0 32 32"><path d="M6.6,6H12V2.6Q12,2 12.6,2H21.4Q22,2 22,2.6V6H27.4Q28,6 28,6.6V10H6V6.6Q6,6 6.6,6Z" fill="#727272" /><rect x="14" y="4" width="6" height="2" fill="#fff"/><path d="M8,12H26V29Q26,30 25,30H9Q8,30 8,29Z" fill="#727272" /><rect x="10" y="14" width="2" height="14" fill="#fff"/><rect x="14" y="14" width="2" height="14" fill="#fff"/><rect x="18" y="14" width="2" height="14" fill="#fff"/><rect x="22" y="14" width="2" height="14" fill="#fff"/></svg>
<svg class="ic" style="left:1625px;top:681px" viewBox="0 0 32 32"><g transform="translate(32,0) scale(-1,1)"><path d="M16,30A14,14 0 1 1 26.85,7.15L30,4V14H20L24,10A10,10 0 1 0 16,26Z" fill="#1177D7" /></g></svg>
<svg class="ic" style="left:779px;top:769px" viewBox="0 0 32 32"><path d="M2,6H12V10H20V14H8L2,25Z" fill="#FFB115" opacity="0.5"/><path d="M9,16H30L25,26H4Z" fill="#FFB115" /><rect x="22" y="8" width="4" height="6" fill="#039C23"/><path d="M24,2L30,8H18Z" fill="#039C23" /></svg>
<svg class="ic" style="left:873px;top:769px" viewBox="0 0 32 32"><path d="M2,18C2,10 7,6 12,6C18,6 22,11 26,18L30,14V24H20L22.5,21.5C19,14 16,10 12,10C9,10 6,13 6,18Z" fill="#1177D7" /></svg>
<svg class="ic" style="left:967px;top:769px" viewBox="0 0 32 32"><g transform="translate(32,0) scale(-1,1)"><path d="M2,18C2,10 7,6 12,6C18,6 22,11 26,18L30,14V24H20L22.5,21.5C19,14 16,10 12,10C9,10 6,13 6,18Z" fill="#1177D7" /></g></svg>
<svg class="ic" style="left:1061px;top:769px" viewBox="0 0 32 32"><circle cx="10" cy="22" r="6.3" fill="#727272" /><rect x="0" y="20.0" width="20" height="4" fill="#727272" transform="rotate(0 10 22)"/><rect x="0.1999999999999993" y="20.4" width="19.6" height="3.2" fill="#727272" transform="rotate(45 10 22)"/><rect x="0" y="20.0" width="20" height="4" fill="#727272" transform="rotate(90 10 22)"/><rect x="0.1999999999999993" y="20.4" width="19.6" height="3.2" fill="#727272" transform="rotate(135 10 22)"/><circle cx="10" cy="22" r="3" fill="#fff" /><circle cx="25" cy="7" r="4.4" fill="#727272" /><rect x="18" y="6.0" width="14" height="2" fill="#727272" transform="rotate(0 25 7)"/><rect x="18.2" y="6.1" width="13.6" height="1.8" fill="#727272" transform="rotate(45 25 7)"/><rect x="18" y="6.0" width="14" height="2" fill="#727272" transform="rotate(90 25 7)"/><rect x="18.2" y="6.1" width="13.6" height="1.8" fill="#727272" transform="rotate(135 25 7)"/><circle cx="25" cy="7" r="2.3" fill="#fff" /></svg>
<div class="t" style="left:777.80px;top:855.18px;font-size:22px;letter-spacing:0.475px;font-weight:bold;">Align</div>
<svg class="ic" style="left:779px;top:899px" viewBox="0 0 32 32"><path d="M1,0H31Q32,0 32,1V31Q32,32 31,32H1Q0,32 0,31V1Q0,0 1,0Z" fill="#727272" /><rect x="2" y="2" width="28" height="28" fill="#fff"/><rect x="2" y="18" width="28" height="12" fill="#039C23"/></svg>
<svg class="ic" style="left:873px;top:899px" viewBox="0 0 32 32"><path d="M1,0H31Q32,0 32,1V31Q32,32 31,32H1Q0,32 0,31V1Q0,0 1,0Z" fill="#727272" /><rect x="2" y="2" width="28" height="28" fill="#fff"/><rect x="2" y="10" width="28" height="12" fill="#039C23"/></svg>
<svg class="ic" style="left:967px;top:899px" viewBox="0 0 32 32"><path d="M1,0H31Q32,0 32,1V31Q32,32 31,32H1Q0,32 0,31V1Q0,0 1,0Z" fill="#727272" /><rect x="2" y="2" width="28" height="28" fill="#fff"/><rect x="2" y="2" width="28" height="12" fill="#039C23"/></svg>
<svg class="ic" style="left:1061px;top:899px" viewBox="0 0 32 32"><path d="M1,0H31Q32,0 32,1V31Q32,32 31,32H1Q0,32 0,31V1Q0,0 1,0Z" fill="#727272" /><rect x="2" y="2" width="28" height="28" fill="#fff"/><rect x="10" y="2" width="12" height="28" fill="#039C23"/></svg>
<svg class="ic" style="left:1155px;top:899px" viewBox="0 0 32 32"><path d="M1,0H31Q32,0 32,1V31Q32,32 31,32H1Q0,32 0,31V1Q0,0 1,0Z" fill="#727272" /><rect x="2" y="2" width="28" height="28" fill="#fff"/><rect x="2" y="2" width="12" height="28" fill="#039C23"/></svg>
<svg class="ic" style="left:1249px;top:899px" viewBox="0 0 32 32"><path d="M1,0H31Q32,0 32,1V31Q32,32 31,32H1Q0,32 0,31V1Q0,0 1,0Z" fill="#727272" /><rect x="2" y="2" width="28" height="28" fill="#fff"/><rect x="18" y="2" width="12" height="28" fill="#039C23"/></svg>
<div class="t" style="left:381.40px;top:1030.98px;font-size:22px;letter-spacing:-0.233px;">Selection:</div>
<div class="box" style="left:383px;top:1063px;width:1368px;height:96px;border:2px solid #7a818f;background:#fff;"></div>
<div class="abs" style="left:739px;top:1067px;width:88px;height:88px;background:#cce8ff;"></div>
<svg class="ic" style="left:399px;top:1079px" viewBox="0 0 32 32"><path d="M2.14,14A14,14 0 0 1 26.85,7.15L30,4V14H20L24,10A10,10 0 0 0 6.2,14Z" fill="#039C23" /><path d="M29.86,18A14,14 0 0 1 5.15,24.85L2,28V18H12L8,22A10,10 0 0 0 25.8,18Z" fill="#039C23" /></svg>
<svg class="ic" style="left:487px;top:1079px" viewBox="0 0 32 32"><path d="M29.96,17A14,14 0 1 1 26.85,7.15L30,4V14H20L24,10A10,10 0 1 0 25.95,17Z" fill="#039C23" /></svg>
<svg class="ic" style="left:575px;top:1079px" viewBox="0 0 32 32"><path d="M16,30A14,14 0 1 1 26.85,7.15L30,4V14H20L24,10A10,10 0 1 0 16,26Z" fill="#1177D7" /></svg>
<svg class="ic" style="left:663px;top:1079px" viewBox="0 0 32 32"><path d="M24,16A10,10 0 1 0 20.16,23.88" fill="none" stroke="#039C23" stroke-width="4"/><path d="M17,16H31L24,23Z" fill="#039C23" /></svg>
<svg class="ic" style="left:751px;top:1079px" viewBox="0 0 32 32"><g transform="translate(32,0) scale(-1,1)"><path d="M16,30A14,14 0 1 1 26.85,7.15L30,4V14H20L24,10A10,10 0 1 0 16,26Z" fill="#1177D7" /></g></svg>
<div class="box" style="left:1441px;top:1173px;width:146px;height:48px;border:4px solid #0078d7;background:#e1e1e1;"></div>
<div class="box" style="left:1603px;top:1173px;width:146px;height:48px;border:2px solid #adadad;background:#e1e1e1;"></div>
<div class="t" style="left:1497.00px;top:1186.98px;font-size:22px;letter-spacing:-1.200px;">OK</div>
<div class="t" style="left:1641.00px;top:1186.98px;font-size:22px;letter-spacing:-0.500px;">Cancel</div>
<svg class="abs" style="left:0;top:0" width="1772" height="1331" viewBox="0 0 1772 1331" font-family="Liberation Sans, sans-serif" fill="#C9284B">
<text x="773.8" y="35.0" font-size="41" stroke="#C9284B" stroke-width="0.35" textLength="270.7" lengthAdjust="spacingAndGlyphs">Image Gallery</text>
<text x="1408.4" y="34.1" font-size="41" stroke="#C9284B" stroke-width="0.35" textLength="215.7" lengthAdjust="spacingAndGlyphs">Search Box</text>
<text x="-1.6" y="583.5" font-size="41" stroke="#C9284B" stroke-width="0.35" textLength="292.7" lengthAdjust="spacingAndGlyphs">Categories Box</text>
<text x="9.2" y="963.5" font-size="41" stroke="#C9284B" stroke-width="0.35" textLength="278.5" lengthAdjust="spacingAndGlyphs">Collection Box</text>
<text x="783" y="1329.8" font-size="41" stroke="#C9284B" stroke-width="0.35" textLength="262.3" lengthAdjust="spacingAndGlyphs">Selection Box</text>
<path d="M911,55V306" fill="none" stroke="#C9284B" stroke-width="4" stroke-linecap="round"/><path d="M900.3,287.8L911,308.4L921.7,287.8" fill="none" stroke="#C9284B" stroke-width="3.6" stroke-linejoin="miter"/>
<path d="M1517,56.5V234" fill="none" stroke="#C9284B" stroke-width="4" stroke-linecap="round"/><path d="M1506.3,215.8L1517,236.4L1527.7,215.8" fill="none" stroke="#C9284B" stroke-width="3.6" stroke-linejoin="miter"/>
<path d="M301.5,573.7H405" fill="none" stroke="#C9284B" stroke-width="4" stroke-linecap="round"/><path d="M388.5,563L406.9,573.7L388.5,584.4" fill="none" stroke="#C9284B" stroke-width="3.6" stroke-linejoin="miter"/>
<path d="M299.5,951.7H405" fill="none" stroke="#C9284B" stroke-width="4" stroke-linecap="round"/><path d="M388.5,941L406.9,951.7L388.5,962.4" fill="none" stroke="#C9284B" stroke-width="3.6" stroke-linejoin="miter"/>
<path d="M917,1279.5V1164" fill="none" stroke="#C9284B" stroke-width="4" stroke-linecap="round"/><path d="M906.3,1182L917,1161.4L927.7,1182" fill="none" stroke="#C9284B" stroke-width="3.6" stroke-linejoin="miter"/>
</svg>
</body></html>
